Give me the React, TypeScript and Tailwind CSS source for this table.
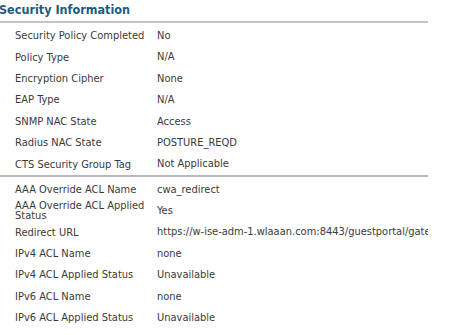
import React from 'react'

const group1: [string, string][] = [
  ['Security Policy Completed', 'No'],
  ['Policy Type', 'N/A'],
  ['Encryption Cipher', 'None'],
  ['EAP Type', 'N/A'],
  ['SNMP NAC State', 'Access'],
  ['Radius NAC State', 'POSTURE_REQD'],
  ['CTS Security Group Tag', 'Not Applicable'],
]

const group2: [string, string][] = [
  ['AAA Override ACL Name', 'cwa_redirect'],
  ['AAA Override ACL Applied Status', 'Yes'],
  ['Redirect URL', 'https://w-ise-adm-1.wlaaan.com:8443/guestportal/gateway?sessionId=0a0a0a0a'],
  ['IPv4 ACL Name', 'none'],
  ['IPv4 ACL Applied Status', 'Unavailable'],
  ['IPv6 ACL Name', 'none'],
  ['IPv6 ACL Applied Status', 'Unavailable'],
]

function Row({ label, value }: { label: string; value: string }) {
  return (
    <div className="flex items-center h-[21.4px]">
      <div className="w-[157px] pl-[15px] pr-[10px] shrink-0 leading-[10px]">{label}</div>
      <div className="whitespace-nowrap overflow-hidden w-[271px]">{value}</div>
    </div>
  )
}

export default function App() {
  return (
    <div className="w-[474px] h-[335px] bg-white overflow-hidden text-[11px] text-[#3a3a3a]" style={{ fontFamily: '"DejaVu Sans Condensed", "DejaVu Sans", Verdana, sans-serif' }}>
      <div className="w-[428px]">
        <h2 className="-ml-[1px] pt-[2px] h-[20.5px] text-[12.5px] font-bold text-[#1d5c7c] leading-[16px]">Security Information</h2>
        <div className="h-[2px] bg-[#c4c4cc]" />
        <div className="pt-[3px]">
          {group1.map(([l, v]) => (
            <Row key={l} label={l} value={v} />
          ))}
        </div>
        <div className="h-[2px] bg-[#b8b8c0]" />
        <div className="pt-[2px]">
          {group2.map(([l, v]) => (
            <Row key={l} label={l} value={v} />
          ))}
        </div>
      </div>
    </div>
  )
}
